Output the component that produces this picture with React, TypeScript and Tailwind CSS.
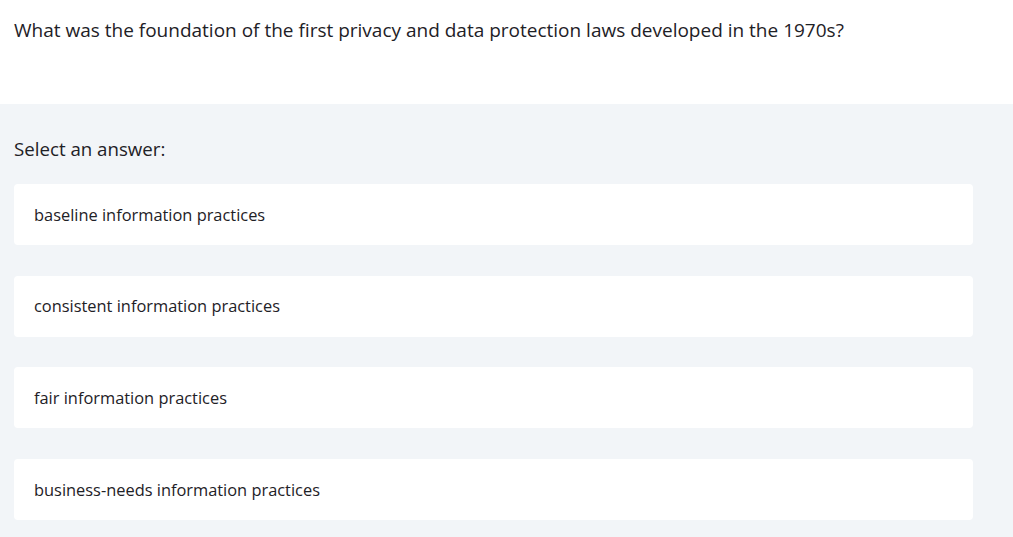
const answers = [
    "baseline information practices",
    "consistent information practices",
    "fair information practices",
    "business-needs information practices",
];

export default function App() {
    return (
        <div className="min-h-[537px] w-full bg-white text-[#1e2126]" style={{ fontFamily: '"Open Sans", "Noto Sans", sans-serif' }}>
            <div className="h-[104px] px-[14px] pt-[17px]">
                <h1 className="text-[19px] leading-[26px]">
                    What was the foundation of the first privacy and data protection laws developed in the 1970s?
                </h1>
            </div>
            <div className="bg-[#f2f5f8] pl-[14px] pr-[40px] pt-[32px] pb-[16px] min-h-[433px]">
                <p className="text-[18.7px] leading-[26px] mb-[22px]">Select an answer:</p>
                <div className="flex flex-col gap-[30.7px]">
                    {answers.map((a, i) => (
                        <div key={i} className="bg-white rounded-[4px] h-[61px] flex items-center px-[20px] cursor-pointer">
                            <span className="text-[16.4px] leading-[22px]">{a}</span>
                        </div>
                    ))}
                </div>
            </div>
        </div>
    );
}
